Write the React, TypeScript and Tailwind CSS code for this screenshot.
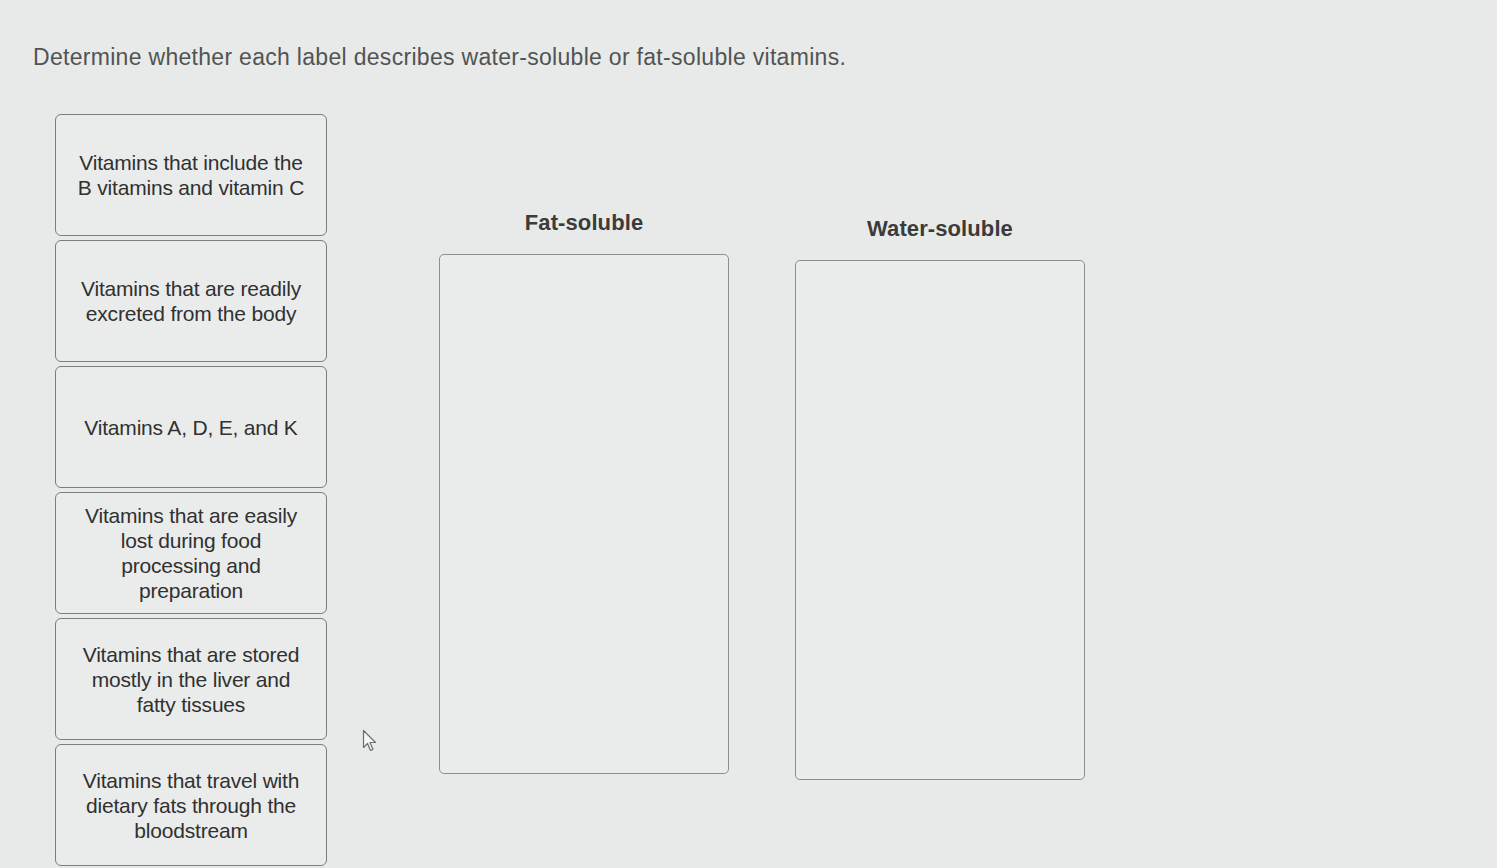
const labels: string[][] = [
  ["Vitamins that include the", "B vitamins and vitamin C"],
  ["Vitamins that are readily", "excreted from the body"],
  ["Vitamins A, D, E, and K"],
  ["Vitamins that are easily", "lost during food", "processing and", "preparation"],
  ["Vitamins that are stored", "mostly in the liver and", "fatty tissues"],
  ["Vitamins that travel with", "dietary fats through the", "bloodstream"],
];

function Pointer() {
  return (
    <svg className="absolute left-[362px] top-[729px]" width="16" height="24" viewBox="0 0 16 24">
      <path
        d="M1.5 1.5 L1.5 18.5 L5.5 14.5 L8.5 21.5 L11 20.5 L8 13.5 L13.5 13.5 Z"
        fill="#f4f5f5"
        stroke="#6b6e6d"
        strokeWidth="1.2"
        strokeLinejoin="round"
      />
    </svg>
  );
}

function DropZone({ title, shift }: { title: string; shift: string }) {
  return (
    <div className={`flex w-[290px] flex-col items-center ${shift}`}>
      <div className="h-[30px] text-[22px] leading-[30px] font-bold text-[#3a3b3b] tracking-[0.1px]">{title}</div>
      <div className="mt-[16px] h-[520px] w-full rounded-[5px] border border-[#8d8f8e] bg-[#ebedec]" />
    </div>
  );
}

export default function App() {
  return (
    <div
      className="relative h-[868px] w-full overflow-hidden bg-[#e8eae9]"
      style={{ fontFamily: '"Liberation Sans", Arial, sans-serif' }}
    >
      <h1 className="pl-[33px] pt-[42px] text-[23px] leading-[30px] text-[#515453] font-normal tracking-[0.3px]">
        Determine whether each label describes water-soluble or fat-soluble vitamins.
      </h1>

      <div className="mt-[42px] flex items-start pl-[55px]">
        <div className="flex w-[272px] flex-col gap-[4px]">
          {labels.map((lines, i) => (
            <div
              key={i}
              className="flex h-[122px] flex-col items-center justify-center rounded-[6px] border border-[#7c7e7d] bg-[#eaeceb] text-center text-[21px] leading-[25px] text-[#303131] tracking-[-0.2px]"
            >
              {lines.map((l) => (
                <div key={l} className="whitespace-nowrap">{l}</div>
              ))}
            </div>
          ))}
        </div>

        <div className="ml-[112px] flex gap-[66px]">
          <DropZone title="Fat-soluble" shift="mt-[94px]" />
          <DropZone title="Water-soluble" shift="mt-[100px]" />
        </div>
      </div>

      <Pointer />
    </div>
  );
}
